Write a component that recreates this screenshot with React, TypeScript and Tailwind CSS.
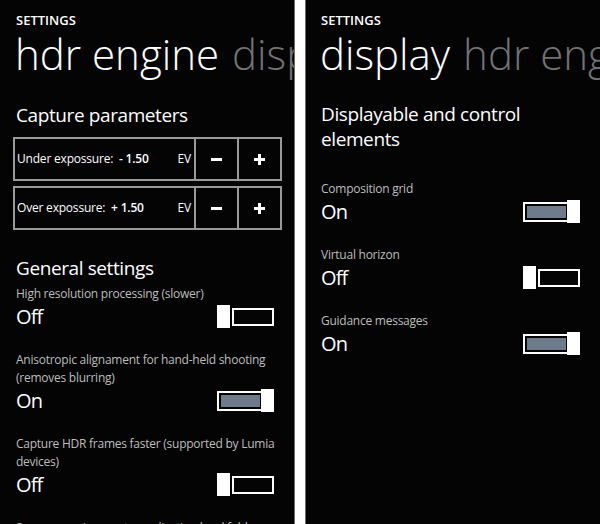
import React from "react";

function Toggle({ on }: { on: boolean }) {
  if (on) {
    return (
      <div className="flex items-center w-[57px] h-[23px] shrink-0">
        <div className="w-[44px] h-[20px] border-2 border-r-0 border-white p-[2px] pr-[1px]">
          <div className="w-full h-full bg-[#6d7b8b]" />
        </div>
        <div className="w-[13px] h-[23px] bg-white" />
      </div>
    );
  }
  return (
    <div className="flex items-center w-[57px] h-[23px] shrink-0">
      <div className="w-[13px] h-[23px] bg-white" />
      <div className="ml-[2px] flex-1 h-[18px] border-2 border-white" />
    </div>
  );
}

function Setting({
  label,
  on,
  first,
}: {
  label: string[];
  on: boolean;
  first?: boolean;
}) {
  return (
    <div className={first ? "" : "mt-[23px]"}>
      <div className="text-[12px] leading-[18px] tracking-[-0.25px] text-[#bdbdbd]">
        {label.map((l) => (
          <div key={l} className="whitespace-nowrap">
            {l}
          </div>
        ))}
      </div>
      <div className="mt-[2px] h-[23px] flex items-center justify-between pr-[20px]">
        <span className="text-[20px] leading-[23px] tracking-[-0.9px] text-white">{on ? "On" : "Off"}</span>
        <Toggle on={on} />
      </div>
    </div>
  );
}

function ExposureRow({ label, value, mt }: { label: string; value: string; mt: string }) {
  return (
    <div className={`ml-[13px] ${mt} w-[269px] h-[44px] border-2 border-[#9a9a9a] flex text-white`}>
      <div className="w-[181px] border-r-2 border-[#9a9a9a] flex items-center justify-between pl-[2px] pr-[3px] text-[12px] tracking-[-0.2px]">
        <span className="whitespace-pre">
          {label}
          <span className="font-semibold">{value}</span>
        </span>
        <span>EV</span>
      </div>
      <div className="w-[43px] border-r-2 border-[#9a9a9a] flex items-center justify-center">
        <div className="w-[11px] h-[3px] bg-white" />
      </div>
      <div className="flex-1 flex items-center justify-center">
        <svg width="11" height="11" viewBox="0 0 11 11">
          <rect x="0" y="4" width="11" height="3" fill="#fff" />
          <rect x="4" y="0" width="3" height="11" fill="#fff" />
        </svg>
      </div>
    </div>
  );
}

function Header({ main, next }: { main: string; next: string }) {
  return (
    <>
      <div className="pt-[12px] text-[13px] leading-[16px] font-semibold text-white pl-[1px]">SETTINGS</div>
      <div className="mt-[2px] flex gap-[13px] whitespace-nowrap text-[42px] leading-[48px] font-light">
        <span className="text-white">{main}</span>
        <span className="text-[#727272]">{next}</span>
      </div>
    </>
  );
}

export default function App() {
  return (
    <div className="w-[600px] h-[524px] flex overflow-hidden bg-black font-['Open_Sans','Noto_Sans',sans-serif]">
      {/* Left panel */}
      <div className="w-[294px] h-full overflow-hidden bg-[#040404] shrink-0">
        <div className="pl-[15px]">
          <Header main="hdr engine" next="display" />
        </div>
        <div className="mt-[24px] pl-[16px] text-[19px] leading-[26px] tracking-[-0.4px] text-white whitespace-nowrap">
          Capture parameters
        </div>
        <ExposureRow label="Under expossure:  " value="- 1.50" mt="mt-[9px]" />
        <ExposureRow label="Over expossure:  " value="+ 1.50" mt="mt-[5px]" />
        <div className="mt-[25px] pl-[16px] text-[19px] leading-[26px] tracking-[-0.4px] text-white whitespace-nowrap">
          General settings
        </div>
        <div className="mt-[4px] pl-[16px]">
          <Setting first label={["High resolution processing (slower)"]} on={false} />
          <Setting label={["Anisotropic alignament for hand-held shooting", "(removes blurring)"]} on={true} />
          <Setting label={["Capture HDR frames faster (supported by Lumia", "devices)"]} on={false} />
          <div className="mt-[23px] text-[12px] leading-[18px] tracking-[-0.25px] text-[#bdbdbd] whitespace-nowrap">
            Save source images to application local folder
          </div>
        </div>
      </div>

      {/* Separator */}
      <div className="w-[12px] h-full bg-white border-x border-[#6a6a6a] shrink-0" />

      {/* Right panel */}
      <div className="w-[294px] h-full overflow-hidden bg-[#040404] shrink-0">
        <div className="pl-[14px]">
          <Header main="display" next="hdr engine" />
        </div>
        <div className="mt-[24px] pl-[15px] text-[19px] leading-[25px] tracking-[-0.4px] text-white">
          <div>Displayable and control</div>
          <div>elements</div>
        </div>
        <div className="mt-[28px] pl-[15px]">
          <Setting first label={["Composition grid"]} on={true} />
          <Setting label={["Virtual horizon"]} on={false} />
          <Setting label={["Guidance messages"]} on={true} />
        </div>
      </div>
    </div>
  );
}
